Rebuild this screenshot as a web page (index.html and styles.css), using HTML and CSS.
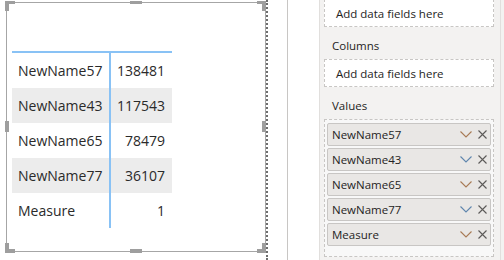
FILE: index.html
```html
<!DOCTYPE html>
<html>
<head>
<meta charset="utf-8">
<link rel="stylesheet" href="styles.css">
</head>
<body>
<div class="app">
  <div class="canvas">
    <div class="visual">
      <span class="h h-tl"></span>
      <span class="h h-tr"></span>
      <span class="h h-bl"></span>
      <span class="h h-br"></span>
      <span class="h h-tm"></span>
      <span class="h h-bm"></span>
      <span class="h h-lm"></span>
      <span class="h h-rm"></span>
      <div class="table">
        <div class="row"><div class="c1">NewName57</div><div class="c2">138481</div></div>
        <div class="row alt"><div class="c1">NewName43</div><div class="c2">117543</div></div>
        <div class="row"><div class="c1">NewName65</div><div class="c2">78479</div></div>
        <div class="row alt"><div class="c1">NewName77</div><div class="c2">36107</div></div>
        <div class="row"><div class="c1">Measure</div><div class="c2">1</div></div>
      </div>
    </div>
    <div class="guide"></div>
  </div>
  <div class="gap"></div>
  <div class="pane">
    <div class="fields">
      <div class="well first">Add data fields here</div>
      <div class="label">Columns</div>
      <div class="well">Add data fields here</div>
      <div class="label">Values</div>
      <div class="values">
        <div class="pill"><span class="name">NewName57</span><svg class="chev warm" width="12" height="7" viewBox="0 0 12 7"><polyline points="0.5,0.5 6,6 11.5,0.5" fill="none" stroke="currentColor" stroke-width="1.1"/></svg><svg class="x" width="9" height="9" viewBox="0 0 9 9"><path d="M0.5 0.5 L8.5 8.5 M8.5 0.5 L0.5 8.5" stroke="currentColor" stroke-width="1.1"/></svg></div>
        <div class="pill"><span class="name">NewName43</span><svg class="chev cool" width="12" height="7" viewBox="0 0 12 7"><polyline points="0.5,0.5 6,6 11.5,0.5" fill="none" stroke="currentColor" stroke-width="1.1"/></svg><svg class="x" width="9" height="9" viewBox="0 0 9 9"><path d="M0.5 0.5 L8.5 8.5 M8.5 0.5 L0.5 8.5" stroke="currentColor" stroke-width="1.1"/></svg></div>
        <div class="pill"><span class="name">NewName65</span><svg class="chev warm" width="12" height="7" viewBox="0 0 12 7"><polyline points="0.5,0.5 6,6 11.5,0.5" fill="none" stroke="currentColor" stroke-width="1.1"/></svg><svg class="x" width="9" height="9" viewBox="0 0 9 9"><path d="M0.5 0.5 L8.5 8.5 M8.5 0.5 L0.5 8.5" stroke="currentColor" stroke-width="1.1"/></svg></div>
        <div class="pill"><span class="name">NewName77</span><svg class="chev cool" width="12" height="7" viewBox="0 0 12 7"><polyline points="0.5,0.5 6,6 11.5,0.5" fill="none" stroke="currentColor" stroke-width="1.1"/></svg><svg class="x" width="9" height="9" viewBox="0 0 9 9"><path d="M0.5 0.5 L8.5 8.5 M8.5 0.5 L0.5 8.5" stroke="currentColor" stroke-width="1.1"/></svg></div>
        <div class="pill"><span class="name">Measure</span><svg class="chev warm" width="12" height="7" viewBox="0 0 12 7"><polyline points="0.5,0.5 6,6 11.5,0.5" fill="none" stroke="currentColor" stroke-width="1.1"/></svg><svg class="x" width="9" height="9" viewBox="0 0 9 9"><path d="M0.5 0.5 L8.5 8.5 M8.5 0.5 L0.5 8.5" stroke="currentColor" stroke-width="1.1"/></svg></div>
      </div>
    </div>
    <div class="edge"></div>
  </div>
</div>
</body>
</html>
```
FILE: styles.css
```css
* { box-sizing: border-box; }
html, body { margin: 0; padding: 0; }
body {
  width: 504px;
  height: 260px;
  overflow: hidden;
  background: #ffffff;
  font-family: "Open Sans", "Noto Sans", sans-serif;
  color: #252423;
}
.app {
  display: flex;
  height: 260px;
}
.canvas {
  width: 288px;
  height: 260px;
  border-right: 1px solid #c8c6c4;
  display: flex;
  align-items: flex-start;
}
.visual {
  position: relative;
  margin-left: 6px;
  margin-top: 2px;
  width: 260px;
  height: 250px;
  border: 1px solid #a6a6a6;
}
.guide {
  width: 2px;
  align-self: stretch;
  border-left: 2px dotted #6e6e6e;
}
.h {
  position: absolute;
  display: block;
  background: #9e9e9e;
}
.h-tl { left: -2px; top: -2px; width: 10px; height: 10px; background: none; border-top: 3px solid #9e9e9e; border-left: 4px solid #9e9e9e; }
.h-tr { right: -1px; top: -2px; width: 9px; height: 10px; background: none; border-top: 3px solid #9e9e9e; border-right: 4px solid #9e9e9e; }
.h-bl { left: -2px; bottom: -2px; width: 10px; height: 10px; background: none; border-bottom: 4px solid #9e9e9e; border-left: 4px solid #9e9e9e; }
.h-br { right: -1px; bottom: -2px; width: 9px; height: 10px; background: none; border-bottom: 4px solid #9e9e9e; border-right: 4px solid #9e9e9e; }
.h-tm { left: 123px; top: -2px; width: 12px; height: 3px; }
.h-bm { left: 123px; bottom: -2px; width: 12px; height: 4px; }
.h-lm { left: -2px; top: 118px; width: 4px; height: 11px; }
.h-rm { right: -1px; top: 118px; width: 4px; height: 11px; }

.table {
  margin-left: 5px;
  margin-top: 48px;
  width: 160px;
  border-top: 2px solid #89c2f5;
  font-size: 14px;
  color: #2a2a2a;
}
.row {
  display: flex;
  height: 35px;
}
.row.alt { background: #ececec; }
.c1 {
  width: 99px;
  padding-left: 6px;
  border-right: 2px solid #89c2f5;
  display: flex;
  align-items: center;
}
.c2 {
  width: 61px;
  padding-right: 7px;
  display: flex;
  align-items: center;
  justify-content: flex-end;
}

.gap { width: 31px; }
.pane {
  flex: 1;
  display: flex;
  background: #f3f2f1;
  border-left: 1px solid #e1dfdd;
}
.fields {
  width: 180px;
  font-size: 11.5px;
}
.edge {
  width: 3px;
  border-left: 1px solid #e1dfdd;
}
.well {
  margin-left: 4px;
  width: 170px;
  height: 28px;
  border: 1px dashed #c8c6c4;
  background: #ffffff;
  padding-left: 11px;
  display: flex;
  align-items: center;
}
.well.first { margin-top: -1px; }
.label {
  height: 32px;
  padding-top: 11px;
  padding-left: 12px;
  line-height: 16px;
}
.values {
  margin-left: 4px;
  width: 170px;
  height: 138px;
  border: 1px dashed #c8c6c4;
  background: #f8f8f8;
  padding: 3px 2px 0 2px;
  display: flex;
  flex-direction: column;
  gap: 2px;
}
.pill {
  height: 23px;
  border: 1px solid #c8c6c4;
  border-radius: 2px;
  background: #e9e7e5;
  display: flex;
  align-items: center;
  padding-left: 4px;
  padding-right: 3px;
}
.name { flex: 1; }
.chev { margin-right: 6px; }
.chev.warm { color: #a87a55; }
.chev.cool { color: #5f86ad; }
.x { color: #5c5a58; }
```
